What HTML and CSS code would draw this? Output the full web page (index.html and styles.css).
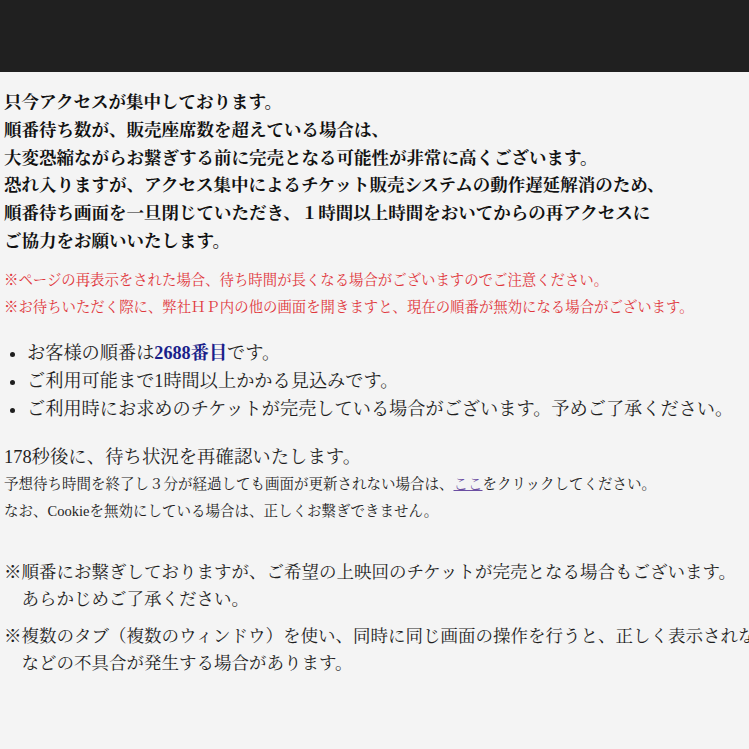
FILE: index.html
```html
<!DOCTYPE html>
<html lang="ja">
<head>
<meta charset="utf-8">
<title>順番待ち</title>
<link rel="stylesheet" href="styles.css">
</head>
<body>
<header class="topbar"></header>
<main class="content">
  <p class="lead">只今アクセスが集中しております。<br>順番待ち数が、販売座席数を超えている場合は、<br>大変恐縮ながらお繋ぎする前に完売となる可能性が非常に高くございます。<br>恐れ入りますが、アクセス集中によるチケット販売システムの動作遅延解消のため、<br>順番待ち画面を一旦閉じていただき、１時間以上時間をおいてからの再アクセスに<br>ご協力をお願いいたします。</p>
  <p class="alert">※ページの再表示をされた場合、待ち時間が長くなる場合がございますのでご注意ください。<br>※お待ちいただく際に、弊社ＨＰ内の他の画面を開きますと、現在の順番が無効になる場合がございます。</p>
  <ul class="status">
    <li>お客様の順番は<strong class="num">2688番目</strong>です。</li>
    <li>ご利用可能まで1時間以上かかる見込みです。</li>
    <li>ご利用時にお求めのチケットが完売している場合がございます。予めご了承ください。</li>
  </ul>
  <p class="countdown">178秒後に、待ち状況を再確認いたします。</p>
  <p class="small">予想待ち時間を終了し３分が経過しても画面が更新されない場合は、<a href="#" class="link">ここ</a>をクリックしてください。<br>なお、Cookieを無効にしている場合は、正しくお繋ぎできません。</p>
  <p class="note note-first">※順番にお繋ぎしておりますが、ご希望の上映回のチケットが完売となる場合もございます。<br>あらかじめご了承ください。</p>
  <p class="note">※複数のタブ（複数のウィンドウ）を使い、同時に同じ画面の操作を行うと、正しく表示されない<br>などの不具合が発生する場合があります。</p>
</main>
</body>
</html>
```
FILE: styles.css
```css
html, body {
  margin: 0;
  padding: 0;
  overflow-x: hidden;
}
body {
  background: #f4f4f4;
  color: #1e1e1e;
  font-family: "Liberation Serif", "Noto Serif CJK JP", "Noto Sans CJK JP", serif;
}
.topbar {
  height: 72px;
  background: #202020;
}
.content {
  padding: 0 4px;
}
.content p {
  margin: 0;
}
.lead {
  margin-top: 17px !important;
  font-size: 17.5px;
  line-height: 27.8px;
  font-weight: bold;
  color: #111;
  white-space: nowrap;
}
.alert {
  margin-top: 11px !important;
  font-size: 14.4px;
  line-height: 27px;
  color: #e0373c;
  white-space: nowrap;
}
.status {
  margin: 18px 0 0;
  padding-left: 23px;
  font-size: 18.2px;
  line-height: 28px;
  white-space: nowrap;
}
.num {
  color: #1a1f8a;
  font-weight: bold;
}
.countdown {
  margin-top: 20px !important;
  font-size: 18.4px;
  line-height: 28px;
}
.small {
  font-size: 14.5px;
  line-height: 27px;
  white-space: nowrap;
}
.link {
  color: #6b4ea2;
  text-decoration: underline;
}
.note {
  margin-top: 10px !important;
  font-size: 17.5px;
  line-height: 27px;
  padding-left: 1em;
  text-indent: -1em;
  white-space: nowrap;
}
.note-first {
  margin-top: 34px !important;
}
```
